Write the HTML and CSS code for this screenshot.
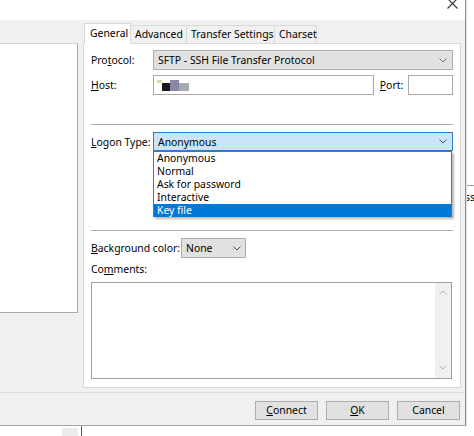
FILE: index.html
```html
<!DOCTYPE html>
<html>
<head>
<meta charset="utf-8">
<link rel="stylesheet" href="styles.css">
</head>
<body>
<div class="screen">
  <div class="main">
    <div class="dialog">
      <div class="titlebar">
        <svg class="close" width="11" height="11" viewBox="0 0 11 11"><path d="M0.5 0.5 L10.5 10.5 M10.5 0.5 L0.5 10.5" stroke="#333" stroke-width="1.1" fill="none"/></svg>
      </div>
      <div class="body">
        <div class="content">
          <div class="sitelist"></div>
          <div class="tabs">
            <div class="tabstrip">
              <div class="tab active t-general">General</div>
              <div class="tab t-adv">Advanced</div>
              <div class="tab t-transfer">Transfer Settings</div>
              <div class="tab t-charset">Charset</div>
            </div>
            <div class="page">
              <div class="row r-protocol">
                <div class="label">Pro<u>t</u>ocol:</div>
                <div class="select wide"><span class="sel-text">SFTP - SSH File Transfer Protocol</span><svg class="chev" width="8" height="5" viewBox="0 0 8 5"><path d="M0.5 0.5 L4 4 L7.5 0.5" stroke="#707070" fill="none"/></svg></div>
              </div>
              <div class="row r-host">
                <div class="label"><u>H</u>ost:</div>
                <div class="input host"><span class="rd rd1"></span><span class="rd rd2"></span><span class="rd rd3"></span><span class="rd rd4"></span></div>
                <div class="label port-label"><u>P</u>ort:</div>
                <div class="input port"></div>
              </div>
              <div class="sep sep1"></div>
              <div class="row r-logon">
                <div class="label"><u>L</u>ogon Type:</div>
                <div class="select wide focused"><span class="sel-text">Anonymous</span><svg class="chev" width="8" height="5" viewBox="0 0 8 5"><path d="M0.5 0.5 L4 4 L7.5 0.5" stroke="#505050" fill="none"/></svg>
                  <ul class="dropdown">
                    <li>Anonymous</li>
                    <li>Normal</li>
                    <li>Ask for password</li>
                    <li>Interactive</li>
                    <li class="hl">Key file</li>
                  </ul>
                </div>
              </div>
              <div class="sep sep2"></div>
              <div class="row r-bg">
                <div class="label bg-label"><u>B</u>ackground color:</div>
                <div class="select small"><span class="sel-text">None</span><svg class="chev" width="8" height="5" viewBox="0 0 8 5"><path d="M0.5 0.5 L4 4 L7.5 0.5" stroke="#505050" fill="none"/></svg></div>
              </div>
              <div class="label comments-label">Co<u>m</u>ments:</div>
              <div class="textarea">
                <div class="scrollbar">
                  <svg width="8" height="5" viewBox="0 0 8 5"><path d="M0.5 4.5 L4 1 L7.5 4.5" stroke="#b0b0b0" fill="none"/></svg>
                  <svg width="8" height="5" viewBox="0 0 8 5"><path d="M0.5 0.5 L4 4 L7.5 0.5" stroke="#b0b0b0" fill="none"/></svg>
                </div>
              </div>
            </div>
          </div>
        </div>
        <div class="footer">
          <div class="btn"><u>C</u>onnect</div>
          <div class="btn"><u>O</u>K</div>
          <div class="btn">Cancel</div>
        </div>
      </div>
    </div>
    <div class="side">
      <div class="side-line"></div>
      <div class="side-text">ss</div>
    </div>
  </div>
  <div class="taskbar">
    <div class="tb-block"></div>
    <div class="tb-line"></div>
  </div>
</div>
</body>
</html>
```

FILE: styles.css
```css
* { box-sizing: border-box; }
html, body { margin: 0; padding: 0; background: #fff; }
body {
  font-family: "Noto Sans", "Open Sans", sans-serif;
  font-size: 10.4px;
  color: #000;
}
u { text-decoration: underline; text-underline-offset: 1px; }

.screen { width: 474px; height: 436px; overflow: hidden; display: flex; flex-direction: column; }
.main { display: flex; height: 426px; }

.dialog { width: 466px; border-right: 1px solid #8f8f8f; display: flex; flex-direction: column; }
.titlebar { height: 20px; background: #fff; display: flex; justify-content: flex-end; align-items: flex-start; overflow: hidden; }
.close { margin-top: -2px; margin-right: 7px; }

.body { height: 406px; background: #f0f0f0; border-bottom: 1px solid #a5a5a5; display: flex; flex-direction: column; }
.content { height: 372px; display: flex; align-items: flex-start; }

.sitelist {
  margin-top: 23px; width: 78px; height: 270px; background: #fff;
  border-top: 1px solid #d4d4d4; border-right: 1px solid #a9a9a9; border-bottom: 1px solid #a9a9a9;
}

.tabs { margin-left: 5px; margin-top: 3px; width: 378px; display: flex; flex-direction: column; }
.tabstrip { height: 20px; display: flex; align-items: flex-end; padding-left: 1px; }
.tab {
  height: 18px; line-height: 16px; background: #f0f0f0; color: #000;
  border: 1px solid #d9d9d9; border-bottom: none; padding: 0 4px; white-space: nowrap;
  margin-left: -1px;
}
.tab.active { line-height: 19px; background: #fff; position: relative; z-index: 1; margin-bottom: -1px; height: 21px; padding-left: 5px; }
.t-general { width: 47px; margin-left: 0; }
.t-adv { width: 57px; }
.t-transfer { width: 89px; }
.t-charset { width: 43px; }

.page {
  height: 345px; background: #fff; border: 1px solid #d9d9d9;
  padding: 6px 7px 0 7px; display: flex; flex-direction: column;
}

.row { display: flex; align-items: center; }
.label { width: 62px; flex: none; white-space: nowrap; }

.select {
  height: 20px; background: #e1e1e1; border: 1px solid #adadad;
  display: flex; align-items: center; justify-content: space-between;
  padding: 0 5px 0 4px; position: relative; white-space: nowrap;
}
.select.wide { width: 300px; }
.select.focused { background: #cce4f7; border-color: #2a7dc9; height: 19px; }
.chev { flex: none; }

.r-host { margin-top: 5px; }
.input { height: 20px; background: #fff; border: 1px solid #a9a9a9; }
.input.host { width: 222px; display: flex; align-items: center; padding-left: 3px; }
.rd { display: inline-block; }
.rd1 { width: 5px; height: 3px; background: #e6d8a8; margin-top: -7px; }
.rd2 { width: 8px; height: 8px; background: #1a1a1a; margin-top: 3px; }
.rd3 { width: 9px; height: 11px; background: #8c86a6; }
.rd4 { width: 10px; height: 8px; background: #a3adb0; margin-top: 3px; }
.port-label { width: auto; margin-left: 6px; margin-right: 5px; }
.input.port { width: 45px; }

.sep { height: 0; border-top: 1px solid #a8a8a8; border-bottom: 1px solid #fff; }
.sep1 { margin-top: 29px; }
.r-logon { margin-top: 6px; }

.dropdown {
  position: absolute; left: -1px; top: 18px; width: 299px; height: 66px;
  margin: 0; padding: 0; list-style: none; background: #fff;
  border: 1px solid #6e6e6e; box-shadow: 2px 2px 2px rgba(0,0,0,0.28); z-index: 5;
}
.dropdown li { height: 13px; line-height: 13px; padding-left: 3px; overflow: hidden; }
.dropdown li.hl { background: #0078d7; color: #fff; }

.sep2 { margin-top: 79px; }
.r-bg { margin-top: 6px; }
.bg-label { width: 90px; }
.select.small { width: 65px; padding-right: 4px; }

.comments-label { margin-top: 4px; line-height: 14px; }
.textarea {
  margin-top: 6px; width: 361px; height: 97px; background: #fff;
  border: 1px solid #a0a0a0; display: flex; justify-content: flex-end;
}
.scrollbar {
  width: 16px; background: #f0f0f0; display: flex; flex-direction: column;
  justify-content: space-between; align-items: center; padding: 7px 0 8px;
}

.footer {
  height: 33px; border-top: 1px solid #dcdcdc; display: flex; justify-content: flex-end;
  align-items: flex-start; padding-top: 8px; padding-right: 5px; gap: 8px;
}
.btn {
  width: 63px; height: 19px; background: #e1e1e1; border: 1px solid #adadad;
  display: flex; align-items: center; justify-content: center; line-height: 1;
}

.side { flex: 1; background: #fff; display: flex; flex-direction: column; overflow: hidden; border-left: 1px solid #e2e2e2; }
.side-line { margin-top: 185px; height: 1px; background: #9a9a9a; }
.side-text { margin-top: 4px; margin-left: -2px; line-height: 14px; white-space: nowrap; }

.taskbar { height: 10px; background: #fff; display: flex; }
.tb-block { margin-left: 62px; margin-top: 2px; width: 16px; height: 8px; background: #ececec; }
.tb-line { margin-left: 3px; width: 1px; height: 10px; background: #555; }
```
